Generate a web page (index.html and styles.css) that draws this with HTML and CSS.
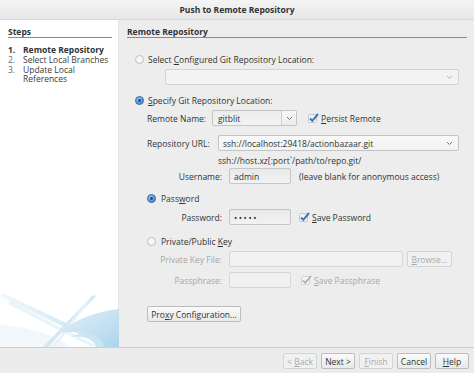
FILE: index.html
```html
<!DOCTYPE html>
<html>
<head>
<meta charset="utf-8">
<link rel="stylesheet" href="styles.css">
</head>
<body>
<div class="window">
  <div class="titlebar">Push to Remote Repository</div>
  <div class="main">
    <aside class="sidebar">
      <div class="steps-title">Steps</div>
      <ol class="steps">
        <li class="current"><span class="num">1.</span><span>Remote Repository</span></li>
        <li><span class="num">2.</span><span>Select Local Branches</span></li>
        <li><span class="num">3.</span><span>Update Local<br>References</span></li>
      </ol>
      <svg class="swoosh" width="119" height="72" viewBox="0 0 119 72">
        <defs>
          <linearGradient id="gC" x1="0" y1="0" x2="1" y2="1">
            <stop offset="0" stop-color="#e4f1f8"/>
            <stop offset="1" stop-color="#add5ec"/>
          </linearGradient>
          <linearGradient id="gA" x1="0" y1="0" x2="1" y2="0">
            <stop offset="0" stop-color="#f1f8fc"/>
            <stop offset="1" stop-color="#c8e3f2"/>
          </linearGradient>
        </defs>
        <path d="M0,50 C30,52 55,60 70,72 L0,72 Z" fill="#f1f7fb"/>
        <path d="M3,18 L100,64 L98,68 L1,22 Z" fill="url(#gA)"/>
        <path d="M10,26 L95,70 L92,72 L8,29 Z" fill="#e9f4fa"/>
        <path d="M93,20 L96,21 L48,72 L43,72 Z" fill="#d3e8f4"/>
        <path d="M88,24 L90,25 L55,72 L52,72 Z" fill="#e6f2f9"/>
        <path d="M58,58 C75,44 98,36 119,34 L119,72 L98,72 C102,62 88,54 58,58 Z" fill="url(#gC)"/>
        <path d="M70,62 C85,56 100,58 104,72 L96,72 C94,64 84,60 70,62 Z" fill="#cce5f3"/>
      </svg>
    </aside>
    <section class="content">
      <div class="panel-title">Remote Repository</div>

      <div class="row radio-row r1">
        <svg class="radio" width="9" height="9" viewBox="0 0 9 9"><circle cx="4.5" cy="4.5" r="4" fill="#f7f7f7" stroke="#bdbdbd"/></svg>
        <span>Select <u>C</u>onfigured Git Repository Location:</span>
      </div>

      <div class="row combo-row">
        <div class="combo disabled wide">
          <span class="combo-text"></span>
          <svg class="chev" width="7" height="5" viewBox="0 0 7 5"><path d="M1,1 L3.5,3.5 L6,1" fill="none" stroke="#b0b0b0" stroke-width="1"/></svg>
        </div>
      </div>

      <div class="row radio-row r2">
        <svg class="radio" width="9" height="9" viewBox="0 0 9 9"><defs><radialGradient id="rb" cx="0.4" cy="0.35" r="0.7"><stop offset="0" stop-color="#9cc7ef"/><stop offset="1" stop-color="#3f7fcb"/></radialGradient></defs><circle cx="4.5" cy="4.5" r="4" fill="url(#rb)" stroke="#3a6eae"/><circle cx="4.5" cy="4.5" r="1.4" fill="#1f4a82"/></svg>
        <span><u>S</u>pecify Git Repository Location:</span>
      </div>

      <div class="row field-row name-row">
        <span class="name-label">Remote Name:</span>
        <div class="combo editable name-combo">
          <span class="combo-text">gitblit</span>
          <span class="combo-btn"><svg width="7" height="5" viewBox="0 0 7 5"><path d="M1,1 L3.5,3.5 L6,1" fill="none" stroke="#777" stroke-width="1"/></svg></span>
        </div>
        <span class="check persist">
          <svg width="11" height="10" viewBox="0 0 11 10"><rect x="0.5" y="1.5" width="8" height="8" rx="1" fill="#f2f2f2" stroke="#c6c6c6"/><path d="M2,5.5 L4.3,7.8 L10,1" fill="none" stroke="#3c77bf" stroke-width="2"/></svg>
          <span><u>P</u>ersist Remote</span>
        </span>
      </div>

      <div class="row field-row url-row">
        <span class="url-label">Repository URL:</span>
        <div class="combo editable url-combo">
          <span class="combo-text">ssh://localhost:29418/actionbazaar.git</span>
          <svg class="chev" width="7" height="5" viewBox="0 0 7 5"><path d="M1,1 L3.5,3.5 L6,1" fill="none" stroke="#777" stroke-width="1"/></svg>
        </div>
      </div>

      <div class="row hint-row">ssh://host.xz[:port`/path/to/repo.git/</div>

      <div class="row field-row user-row">
        <span class="rlabel">Username:</span>
        <div class="field short">admin</div>
        <span class="after">(leave blank for anonymous access)</span>
      </div>

      <div class="row radio-row r3">
        <svg class="radio" width="9" height="9" viewBox="0 0 9 9"><defs><radialGradient id="rb2" cx="0.4" cy="0.35" r="0.7"><stop offset="0" stop-color="#9cc7ef"/><stop offset="1" stop-color="#3f7fcb"/></radialGradient></defs><circle cx="4.5" cy="4.5" r="4" fill="url(#rb2)" stroke="#3a6eae"/><circle cx="4.5" cy="4.5" r="1.4" fill="#1f4a82"/></svg>
        <span>Pass<u>w</u>ord</span>
      </div>

      <div class="row field-row pw-row">
        <span class="rlabel">Password:</span>
        <div class="field short dots">•••••</div>
        <span class="check savepw">
          <svg width="11" height="10" viewBox="0 0 11 10"><rect x="0.5" y="1.5" width="8" height="8" rx="1" fill="#f2f2f2" stroke="#c6c6c6"/><path d="M2,5.5 L4.3,7.8 L10,1" fill="none" stroke="#3c77bf" stroke-width="2"/></svg>
          <span><u>S</u>ave Password</span>
        </span>
      </div>

      <div class="row radio-row r4">
        <svg class="radio" width="9" height="9" viewBox="0 0 9 9"><circle cx="4.5" cy="4.5" r="4" fill="#f7f7f7" stroke="#bdbdbd"/></svg>
        <span>Private/Public <u>K</u>ey</span>
      </div>

      <div class="row field-row key-row">
        <span class="rlabel disabled-text">Private Key File:</span>
        <div class="field long disabled"></div>
        <button class="btn browse disabled-text"><u>B</u>rowse...</button>
      </div>

      <div class="row field-row phrase-row">
        <span class="rlabel disabled-text">Passphrase:</span>
        <div class="field short disabled"></div>
        <span class="check savephrase disabled-text">
          <svg width="11" height="10" viewBox="0 0 11 10"><rect x="0.5" y="1.5" width="8" height="8" rx="1" fill="#f2f2f2" stroke="#d2d2d2"/><path d="M2,5.5 L4.3,7.8 L10,1" fill="none" stroke="#a9a9a9" stroke-width="1.6"/></svg>
          <span><u>S</u>ave Passphrase</span>
        </span>
      </div>

      <div class="row proxy-row">
        <button class="btn proxy">Pro<u>x</u>y Configuration...</button>
      </div>
    </section>
  </div>
  <div class="footer">
    <button class="btn fbtn disabled-text">&lt;&nbsp;<u>B</u>ack</button>
    <button class="btn fbtn">Next&nbsp;&gt;</button>
    <button class="btn fbtn disabled-text"><u>F</u>inish</button>
    <button class="btn fbtn">Cancel</button>
    <button class="btn fbtn"><u>H</u>elp</button>
  </div>
</div>
</body>
</html>
```

FILE: styles.css
```css
html, body {
  margin: 0;
  padding: 0;
}
body {
  font-family: "Open Sans", "Noto Sans", sans-serif;
  font-size: 8.5px;
  color: #2e3436;
}
.window {
  width: 474px;
  height: 373px;
  display: flex;
  flex-direction: column;
  background: #ededed;
  overflow: hidden;
}
.titlebar {
  height: 20px;
  flex: none;
  box-sizing: border-box;
  display: flex;
  align-items: center;
  justify-content: center;
  font-weight: bold;
  font-size: 8.5px;
  color: #2e3436;
  background: linear-gradient(#f4f4f4, #e7e7e7);
  border-bottom: 1px solid #d8d8d8;
}
.main {
  display: flex;
  height: 327px;
  flex: none;
}
.sidebar {
  width: 119px;
  flex: none;
  background: #fff;
  display: flex;
  flex-direction: column;
  padding: 6px 6px 0 8px;
  box-sizing: border-box;
  border-right: 1px solid #e4e4e4;
}
.steps-title {
  font-weight: bold;
  height: 11px;
  line-height: 11px;
  border-bottom: 1px solid #8a8a8a;
}
.steps {
  list-style: none;
  margin: 7px 0 0 0;
  padding: 0;
  line-height: 9.8px;
  color: #3a3a3a;
}
.steps li {
  display: flex;
}
.steps .num {
  width: 15px;
  flex: none;
  color: #6a6a6a;
}
.steps li.current {
  font-weight: bold;
  color: #2e3436;
}
.steps li.current .num {
  color: #2e3436;
}
.swoosh {
  margin-top: auto;
  margin-left: -8px;
  display: block;
}
.content {
  flex: 1;
  padding: 6px 7px 0 8px;
  display: flex;
  flex-direction: column;
  box-sizing: border-box;
}
.panel-title {
  font-weight: bold;
  height: 11px;
  line-height: 11px;
  border-bottom: 1px solid #8a8a8a;
}
.row {
  display: flex;
  align-items: center;
  flex: none;
}
.radio-row {
  height: 14px;
  gap: 4px;
}
.radio {
  display: block;
  flex: none;
}
.r1 { margin: 14px 0 0 8px; }
.r2 { margin: 8px 0 0 8px; }
.r3 { margin: 7px 0 0 20px; }
.r4 { margin: 9px 0 0 20px; }
.r3, .r4 { gap: 5px; }

.combo-row {
  height: 16px;
  margin: 3px 8px 0 38px;
}
.combo {
  height: 16px;
  box-sizing: border-box;
  border: 1px solid #c4c4c4;
  border-radius: 2px;
  background: linear-gradient(#fbfbfb, #f1f1f1);
  display: flex;
  align-items: center;
}
.combo.wide {
  flex: 1;
}
.combo.disabled {
  border-color: #d3d3d3;
  background: #f3f3f3;
}
.combo-text {
  flex: 1;
  padding-left: 5px;
  white-space: nowrap;
}
.chev {
  display: block;
  margin-right: 5px;
  flex: none;
}
.field-row {
  height: 16px;
}
.name-row { margin: 3px 0 0 20px; }
.name-label { width: 65px; flex: none; }
.name-combo {
  width: 85px;
  background: linear-gradient(#ececec, #f4f4f4);
}
.combo-btn {
  width: 14px;
  height: 14px;
  border-left: 1px solid #d0d0d0;
  display: flex;
  align-items: center;
  justify-content: center;
  background: linear-gradient(#f8f8f8, #ececec);
}
.check {
  display: flex;
  align-items: center;
  gap: 2px;
}
.check svg { display: block; flex: none; }
.persist { margin-left: 11px; }

.url-row { margin: 9px 8px 0 20px; }
.url-label { width: 71px; flex: none; }
.url-combo { flex: 1; background: linear-gradient(#f9f9f9, #f2f2f2); }
.url-combo .combo-text { padding-left: 4px; }

.hint-row {
  height: 13px;
  margin: 3px 0 0 91px;
}
.rlabel {
  width: 95px;
  flex: none;
  text-align: right;
  margin-right: 7px;
}
.field {
  height: 16px;
  box-sizing: border-box;
  border: 1px solid #c6c6c6;
  border-radius: 2px;
  background: linear-gradient(#e9e9e9, #f2f2f2);
  padding-left: 4px;
  display: flex;
  align-items: center;
}
.field.short { width: 62px; }
.field.long { width: 174px; }
.field.disabled {
  border-color: #d6d6d6;
  background: #f1f1f1;
}
.field.dots {
  letter-spacing: 1.6px;
  font-size: 8.5px;
}
.user-row { margin-top: 1px; }
.after { margin-left: 8px; }
.pw-row { margin-top: 4px; }
.savepw { margin-left: 8px; }
.key-row { margin-top: 3px; }
.phrase-row { margin-top: 5px; }
.savephrase { margin-left: 10px; }
.disabled-text { color: #a8a8a8; }

.btn {
  font-family: inherit;
  font-size: 8.5px;
  color: #2e3436;
  height: 16px;
  box-sizing: border-box;
  border: 1px solid #bdbdbd;
  border-radius: 2px;
  background: linear-gradient(#fafafa, #e9e9e9);
  padding: 0 2px;
  margin: 0;
  display: flex;
  align-items: center;
  justify-content: center;
  white-space: nowrap;
}
.btn.disabled-text {
  color: #aaaaaa;
  border-color: #d4d4d4;
  background: #f1f1f1;
}
.browse {
  width: 45px;
  margin-left: 4px;
}
.proxy-row {
  margin: 18px 0 0 20px;
  height: 16px;
}
.proxy { width: 94px; }

.footer {
  flex: 1;
  box-sizing: border-box;
  border-top: 1px solid #cfcfcf;
  background: #ececec;
  display: flex;
  justify-content: flex-end;
  align-items: flex-start;
  gap: 4px;
  padding: 5px 5px 0 0;
}
.fbtn { width: 34px; }
```
